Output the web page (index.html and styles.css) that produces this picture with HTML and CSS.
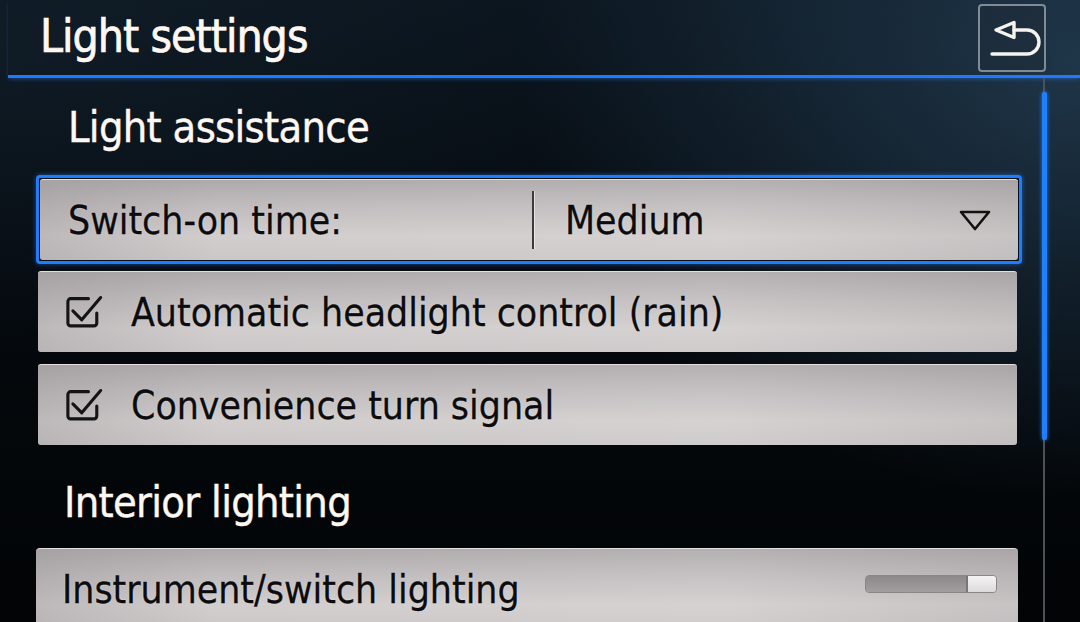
FILE: index.html
```html
<!DOCTYPE html>
<html lang="en">
<head>
<meta charset="utf-8">
<title>Light settings</title>
<link rel="stylesheet" href="styles.css">
</head>
<body>
<div class="screen">
  <header class="topbar">
    <h1 class="title">Light settings</h1>
    <button class="back" type="button" aria-label="Back">
      <svg viewBox="0 0 64 64" width="64" height="64">
        <path class="back-head" d="M16 24 L34 16.5 L34 31.5 Z"/>
        <path class="back-tail" d="M34 24 H47 A12 12 0 0 1 47 48 H12"/>
      </svg>
    </button>
  </header>

  <main class="content">
    <div class="list">
      <h2 class="section section-first">Light assistance</h2>

      <div class="focus">
        <div class="panel select">
          <span class="label">Switch-on time:</span>
          <span class="divider"></span>
          <span class="value">Medium</span>
          <svg class="caret" viewBox="0 0 32 22" width="32" height="22">
            <path d="M2 3 H30 L16 20 Z"/>
          </svg>
        </div>
      </div>

      <div class="panel check">
        <svg class="box" viewBox="0 0 36 32" width="40" height="36">
          <path d="M22 4 H6 a2.5 2.5 0 0 0 -2.5 2.5 V26 a2.5 2.5 0 0 0 2.5 2.5 H27 a2.5 2.5 0 0 0 2.5 -2.5 V17"/>
          <path d="M8 15 L16 23 L33 3"/>
        </svg>
        <span class="label">Automatic headlight control (rain)</span>
      </div>

      <div class="panel check">
        <svg class="box" viewBox="0 0 36 32" width="40" height="36">
          <path d="M22 4 H6 a2.5 2.5 0 0 0 -2.5 2.5 V26 a2.5 2.5 0 0 0 2.5 2.5 H27 a2.5 2.5 0 0 0 2.5 -2.5 V17"/>
          <path d="M8 15 L16 23 L33 3"/>
        </svg>
        <span class="label">Convenience turn signal</span>
      </div>

      <h2 class="section section-second">Interior lighting</h2>

      <div class="panel slider-row">
        <span class="label">Instrument/switch lighting</span>
        <span class="slider"><span class="slider-fill" style="width: 77%"></span><span class="slider-thumb"></span></span>
      </div>
    </div>

    <div class="scrollbar">
      <span class="scroll-thumb"></span>
    </div>
  </main>
</div>
</body>
</html>
```

FILE: styles.css
```css
* {
  box-sizing: border-box;
}

html, body {
  margin: 0;
  padding: 0;
}

body {
  width: 1080px;
  height: 622px;
  overflow: hidden;
  background: #03070b;
  font-family: "DejaVu Sans Condensed", "DejaVu Sans", sans-serif;
}

.screen {
  width: 1080px;
  height: 622px;
  display: flex;
  flex-direction: column;
  background:
    radial-gradient(ellipse 560px 440px at 1080px 60px, rgba(36, 62, 84, 0.8), rgba(20, 36, 50, 0) 100%),
    radial-gradient(ellipse 600px 300px at 0 40px, rgba(20, 34, 46, 0.55), rgba(0, 0, 0, 0) 100%),
    linear-gradient(180deg, #0b151e 0%, #050a0f 45%, #020405 100%);
}

/* ---------- top bar ---------- */
.topbar {
  height: 78px;
  margin-left: 8px;
  padding-left: 32px;
  padding-right: 34px;
  display: flex;
  align-items: flex-start;
  justify-content: space-between;
  border-bottom: 3px solid #1f78ff;
  box-shadow: 0 2px 4px -1px rgba(40, 130, 255, 0.45);
  flex: none;
}

.title {
  margin: 0;
  padding-top: 13px;
  font-size: 46px;
  line-height: 46px;
  font-weight: normal;
  letter-spacing: -1px;
  color: #fff8f2;
  -webkit-text-stroke: 0.7px #fff8f2;
}

.back {
  margin-top: 4px;
  width: 68px;
  height: 68px;
  padding: 0;
  border: 2px solid #7f8c96;
  border-radius: 4px;
  background: rgba(30, 44, 56, 0.6);
  display: flex;
  align-items: center;
  justify-content: center;
}

.back-head,
.back-tail {
  fill: none;
  stroke: #f6f2ee;
  stroke-width: 3.4;
  stroke-linejoin: round;
  stroke-linecap: round;
}

/* ---------- content ---------- */
.content {
  flex: 1;
  display: flex;
  min-height: 0;
  overflow: hidden;
}

.list {
  width: 986px;
  margin-left: 36px;
  display: flex;
  flex-direction: column;
}

.list > * {
  flex: none;
}

.section {
  margin: 0;
  font-weight: normal;
  font-size: 43px;
  line-height: 44px;
  letter-spacing: -0.7px;
  color: #fff8f2;
  -webkit-text-stroke: 0.4px #fff8f2;
}

.section-first {
  padding-left: 32px;
  padding-top: 27px;
  height: 97px;
}

.section-second {
  padding-left: 28px;
  padding-top: 23px;
  height: 91px;
}

.focus {
  height: 89px;
  border: 3px solid #1f7cff;
  border-radius: 4px;
  padding: 1px;
  background: #0a0f14;
  box-shadow: 0 0 5px rgba(40, 130, 255, 0.55);
  margin-bottom: 7px;
}

.panel {
  display: flex;
  align-items: center;
  border-radius: 3px;
  color: #0c0c0e;
  font-size: 38.8px;
  letter-spacing: 0;
  -webkit-text-stroke: 0.3px #0c0c0e;
  text-shadow: 0 0 2px rgba(255, 255, 255, 0.55);
  border-top: 1px solid #e4e0e0;
  background:
    linear-gradient(90deg, rgba(150, 146, 148, 0.35) 0%, rgba(255, 255, 255, 0) 18%, rgba(255, 255, 255, 0.08) 70%, rgba(140, 136, 138, 0.15) 100%),
    linear-gradient(180deg, #aeaaac 0%, #c2bebf 35%, #d2cece 70%, #cbc7c8 100%);
}

.select {
  height: 100%;
  padding-left: 28px;
  padding-right: 27px;
}

.select .label {
  width: 464px;
}

.divider {
  width: 2px;
  height: 58px;
  background: #3c3a3b;
  box-shadow: 1px 0 0 rgba(255, 255, 255, 0.5);
}

.value {
  flex: 1;
  padding-left: 31px;
}

.caret path {
  fill: none;
  stroke: #111;
  stroke-width: 2.6;
  stroke-linejoin: round;
}

.check {
  height: 81px;
  margin-left: 2px;
  margin-right: 5px;
  padding-left: 26px;
  margin-bottom: 12px;
}

.box {
  flex: none;
  margin-right: 27px;
}

.box path {
  fill: none;
  stroke: #141416;
  stroke-width: 2.8;
  stroke-linecap: round;
  stroke-linejoin: round;
}

.slider-row {
  height: 81px;
  margin-right: 4px;
  padding-left: 26px;
  padding-right: 21px;
  justify-content: space-between;
  border-radius: 4px 4px 0 0;
}

.slider {
  position: relative;
  width: 132px;
  height: 18px;
  margin-bottom: 10px;
  border-radius: 4px;
  background: #c6c2c3;
  border: 1px solid #8a8688;
  box-shadow: inset 0 1px 2px rgba(0, 0, 0, 0.35);
  display: flex;
  overflow: hidden;
}

.slider-fill {
  height: 100%;
  background: linear-gradient(180deg, #8d898b, #a29ea0);
}

.slider-thumb {
  flex: 1;
  background: linear-gradient(180deg, #f6f4f4, #dddadb);
  border-left: 2px solid #7a7678;
}

/* ---------- scrollbar ---------- */
.scrollbar {
  width: 5px;
  margin-left: 20px;
  display: flex;
  flex-direction: column;
  background: linear-gradient(90deg, transparent 1px, #4a5258 1px, #4a5258 3px, transparent 3px);
}

.scroll-thumb {
  flex: none;
  margin-top: 14px;
  height: 348px;
  border-radius: 2px;
  background: #1f80ff;
  box-shadow: 0 0 4px rgba(40, 140, 255, 0.8);
}
```
